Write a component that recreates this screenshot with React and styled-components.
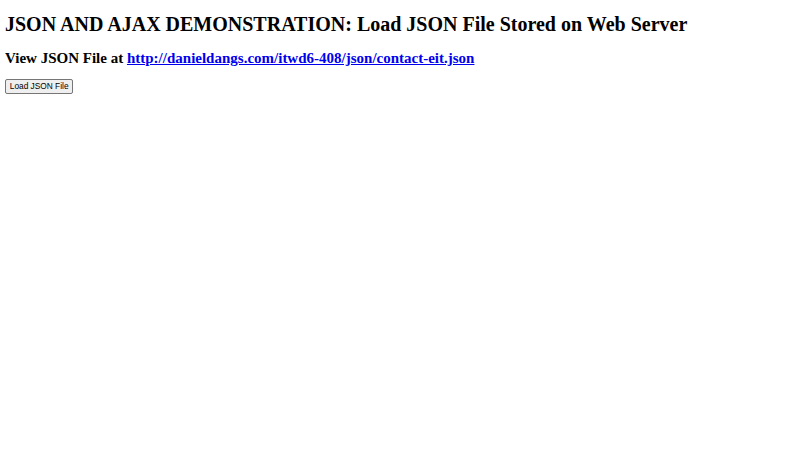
import React from "react";
import styled, { createGlobalStyle } from "styled-components";

const Global = createGlobalStyle`
  html, body { background: #fff; }
  body {
    margin: 0 5px 5px;
    font-family: "Liberation Serif", "Times New Roman", serif;
    font-size: 10px;
    color: #000;
  }
`;

const Title = styled.h1`
  font-size: 20px;
  font-weight: bold;
  margin: 13.4px 0;
`;

const Subtitle = styled.h2`
  font-size: 15px;
  font-weight: bold;
  margin: 12.45px 0;
`;

const Link = styled.a`
  color: #0000ee;
  text-decoration: underline;
`;

const LoadButton = styled.button`
  font-family: "Liberation Sans", Arial, sans-serif;
  font-size: 8.33px;
  padding: 1.2px 3.75px;
  margin: 0;
  background: #efefef;
  color: #000;
  border: 1.25px solid #767676;
  border-radius: 2px;
  line-height: normal;
`;

export default function App() {
  return (
    <>
      <Global />
      <Title>JSON AND AJAX DEMONSTRATION: Load JSON File Stored on Web Server</Title>
      <Subtitle>
        View JSON File at{" "}
        <Link href="http://danieldangs.com/itwd6-408/json/contact-eit.json">
          http://danieldangs.com/itwd6-408/json/contact-eit.json
        </Link>
      </Subtitle>
      <LoadButton type="button">Load JSON File</LoadButton>
    </>
  );
}
